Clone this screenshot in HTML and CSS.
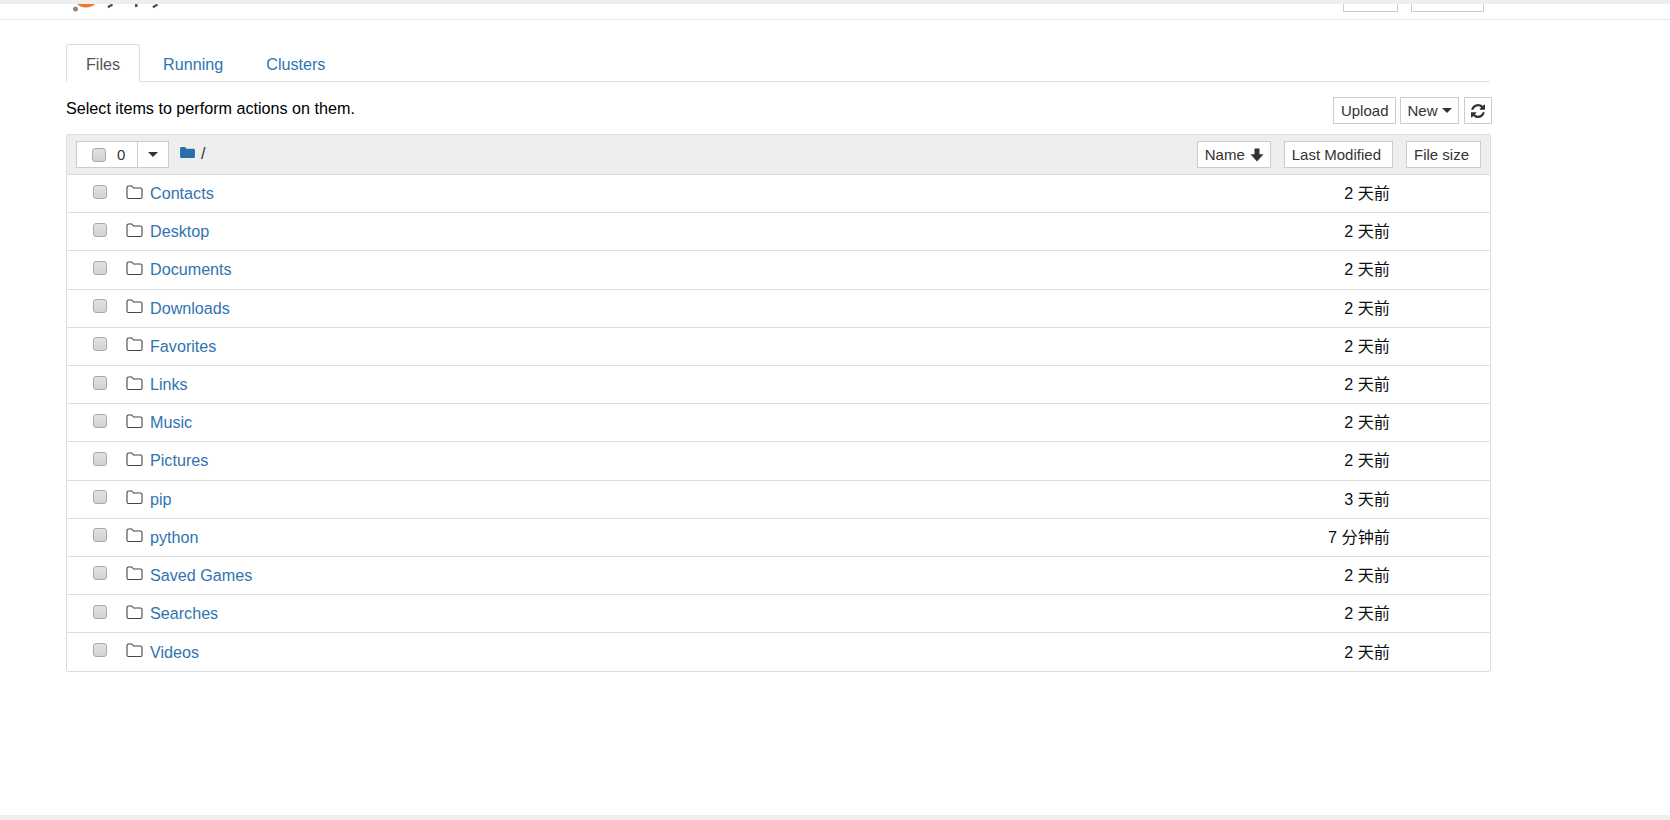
FILE: index.html
```html
<!DOCTYPE html>
<html lang="zh">
<head>
<meta charset="utf-8">
<title>Home</title>
<link rel="stylesheet" href="styles.css">
</head>
<body>
<header class="site-header">
  <svg class="logo" width="96" height="15" viewBox="0 0 96 15">
    <path d="M11 0 C15 4.500 25 4.500 29 0 Z" fill="#f37726"/>
    <circle cx="9.500" cy="5" r="2.500" fill="#8a8a8a"/>
    <path d="M46.500 0.500 L41.800 3.200" stroke="#4e4e4e" stroke-width="2.200" fill="none"/>
    <rect x="69" y="0" width="2.500" height="3" fill="#4e4e4e"/>
    <path d="M91.500 0.500 L86.800 3.200" stroke="#4e4e4e" stroke-width="2.200" fill="none"/>
  </svg>
  <div class="header-buttons">
    <span class="top-btn top-btn-a"></span>
    <span class="top-btn top-btn-b"></span>
  </div>
</header>
<main class="container">
  <nav class="tabs">
    <a class="tab active">Files</a>
    <a class="tab">Running</a>
    <a class="tab">Clusters</a>
  </nav>
  <div class="toolbar">
    <span class="hint">Select items to perform actions on them.</span>
    <div class="actions">
      <button class="btn btn-action">Upload</button>
      <button class="btn btn-action">New <i class="caret"></i></button>
      <button class="btn btn-icon" aria-label="Refresh">
        <svg width="14" height="14" viewBox="0 0 1536 1536"><path fill="#333" d="M1511 928q0 5-1 7-64 268-268 434.500t-478 166.500q-146 0-282.500-55t-243.500-157l-129 129q-19 19-45 19t-45-19-19-45v-448q0-26 19-45t45-19h448q26 0 45 19t19 45-19 45l-137 137q71 66 161 102t187 36q134 0 250-65t186-179q11-17 53-117 8-23 30-23h192q13 0 22.500 9.500t9.500 22.500zm25-800v448q0 26-19 45t-45 19h-448q-26 0-45-19t-19-45 19-45l138-138q-148-137-349-137-134 0-250 65t-186 179q-11 17-53 117-8 23-30 23h-199q-13 0-22.500-9.500t-9.500-22.500v-7q65-268 270-434.500t480-166.500q146 0 284 55.500t245 156.500l130-129q19-19 45-19t45 19 19 45z"/></svg>
      </button>
    </div>
  </div>
  <section class="list">
    <div class="list-head">
      <div class="select-group">
        <span class="select-main"><input type="checkbox" class="check"><span class="count">0</span></span>
        <span class="select-drop"><i class="caret"></i></span>
      </div>
      <svg class="crumb-icon" width="15" height="13" viewBox="0 0 16 14"><path fill="#296eaa" d="M1.500 1h4l1.500 2h7.500q1.500 0 1.500 1.500v7q0 1.500-1.500 1.500h-13q-1.500 0-1.500-1.500v-9q0-1.500 1.500-1.500z"/></svg>
      <span class="crumb-sep">/</span>
      <div class="sorts">
        <button class="btn btn-name">Name <svg width="14" height="14" viewBox="0 0 14 14"><path fill="#333" d="M4.500 0.500h5v5.800h4l-6.500 7.200L0.500 6.300h4z"/></svg></button>
        <button class="btn btn-wide">Last Modified</button>
        <button class="btn btn-wide">File size</button>
      </div>
    </div>
    <div class="row"><input type="checkbox" class="check"><svg class="folder"><use href="#folder-o"/></svg><a class="name">Contacts</a><span class="time">2 天前</span></div>
    <div class="row"><input type="checkbox" class="check"><svg class="folder"><use href="#folder-o"/></svg><a class="name">Desktop</a><span class="time">2 天前</span></div>
    <div class="row"><input type="checkbox" class="check"><svg class="folder"><use href="#folder-o"/></svg><a class="name">Documents</a><span class="time">2 天前</span></div>
    <div class="row"><input type="checkbox" class="check"><svg class="folder"><use href="#folder-o"/></svg><a class="name">Downloads</a><span class="time">2 天前</span></div>
    <div class="row"><input type="checkbox" class="check"><svg class="folder"><use href="#folder-o"/></svg><a class="name">Favorites</a><span class="time">2 天前</span></div>
    <div class="row"><input type="checkbox" class="check"><svg class="folder"><use href="#folder-o"/></svg><a class="name">Links</a><span class="time">2 天前</span></div>
    <div class="row"><input type="checkbox" class="check"><svg class="folder"><use href="#folder-o"/></svg><a class="name">Music</a><span class="time">2 天前</span></div>
    <div class="row"><input type="checkbox" class="check"><svg class="folder"><use href="#folder-o"/></svg><a class="name">Pictures</a><span class="time">2 天前</span></div>
    <div class="row"><input type="checkbox" class="check"><svg class="folder"><use href="#folder-o"/></svg><a class="name">pip</a><span class="time">3 天前</span></div>
    <div class="row"><input type="checkbox" class="check"><svg class="folder"><use href="#folder-o"/></svg><a class="name">python</a><span class="time">7 分钟前</span></div>
    <div class="row"><input type="checkbox" class="check"><svg class="folder"><use href="#folder-o"/></svg><a class="name">Saved Games</a><span class="time">2 天前</span></div>
    <div class="row"><input type="checkbox" class="check"><svg class="folder"><use href="#folder-o"/></svg><a class="name">Searches</a><span class="time">2 天前</span></div>
    <div class="row"><input type="checkbox" class="check"><svg class="folder"><use href="#folder-o"/></svg><a class="name">Videos</a><span class="time">2 天前</span></div>
  </section>
</main>
<footer class="bottom-bar"></footer>
<svg class="defs" width="0" height="0">
  <symbol id="folder-o" viewBox="0 0 17 15">
    <path fill="none" stroke="#444" stroke-width="1.100" d="M2.500 1h3.300l1.700 2h7q1.500 0 1.500 1.500v7.500q0 1.500-1.500 1.500h-12q-1.500 0-1.500-1.500v-9.500q0-1.500 1.500-1.500z"/>
  </symbol>
</svg>
</body>
</html>
```
FILE: styles.css
```css
* { box-sizing: border-box; }
html, body { height: 100%; }
body {
  margin: 0;
  height: 820px;
  overflow: hidden;
  background: #fff;
  color: #000;
  font-family: "Liberation Sans", "Noto Sans CJK SC", sans-serif;
  font-size: 16.150px;
  display: flex;
  flex-direction: column;
}
.site-header {
  height: 20px;
  flex: none;
  border-top: 4px solid #eee;
  border-bottom: 1px solid #e7e7e7;
  display: flex;
  justify-content: space-between;
  padding: 0 186px 0 66px;
  overflow: hidden;
}
.logo { display: block; flex: none; }
.header-buttons { display: flex; gap: 13px; align-items: flex-start; }
.top-btn { display: block; height: 8px; border: 1px solid #ccc; border-top: 0; }
.top-btn-a { width: 55px; }
.top-btn-b { width: 73px; }
.container {
  flex: 1;
  width: 1424px;
  margin-left: 66px;
  padding-top: 24px;
}
.tabs {
  display: flex;
  height: 38px;
  border-bottom: 1px solid #ddd;
}
.tab {
  color: #2f74b0;
  padding: 0 19px 0 20px;
  height: 38px;
  line-height: 38px;
  margin-right: 2px;
  border: 1px solid transparent;
}
.tab.active {
  color: #555;
  padding: 0 19px;
  border: 1px solid #ddd;
  border-bottom-color: #fff;
  border-radius: 3px 3px 0 0;
  background: #fff;
}
.toolbar {
  display: flex;
  justify-content: space-between;
  margin-top: 15px;
  height: 37px;
  width: 1426px;
}
.hint { line-height: 22px; }
.actions { display: flex; gap: 4px; align-items: flex-start; }
.btn {
  font: inherit;
  font-size: 15px;
  color: #333;
  background: #fff;
  border: 1px solid #ccc;
  height: 27px;
  padding: 0 7px;
  display: inline-flex;
  align-items: center;
  gap: 4px;
}
.btn-action { padding: 0 6.500px; }
.btn-icon { padding: 0 6px; margin-left: 1px; }
.btn-name { padding: 0 6px 0 7px; gap: 5px; }
.btn-wide { padding: 0 11px 0 7px; }
.caret {
  display: inline-block;
  width: 0;
  height: 0;
  border-top: 5px solid #333;
  border-left: 5px solid transparent;
  border-right: 5px solid transparent;
}
.list {
  border: 1px solid #ddd;
  border-radius: 2px;
  width: 1425px;
}
.list-head {
  height: 40px;
  background: #eee;
  border-bottom: 1px solid #ddd;
  display: flex;
  align-items: flex-start;
  padding: 6px 9px 0 9px;
}
.select-group { display: flex; height: 27px; }
.select-main {
  width: 62px;
  background: #fff;
  border: 1px solid #ccc;
  display: flex;
  align-items: center;
  padding-left: 15px;
  gap: 11px;
  color: #333;
  font-size: 15px;
}
.select-drop {
  width: 31px;
  background: #fff;
  border: 1px solid #ccc;
  border-left: 0;
  display: flex;
  align-items: center;
  justify-content: center;
}
.crumb-icon { margin: 5px 6px 0 11px; flex: none; }
.crumb-sep { color: #333; margin-top: 3px; }
.sorts { margin-left: auto; display: flex; gap: 13px; }
.check {
  appearance: none;
  -webkit-appearance: none;
  width: 14px;
  height: 14px;
  margin: 0;
  flex: none;
  border: 1px solid #aaa;
  border-radius: 3px;
  background: linear-gradient(#e2e2e2, #d2d2d2);
}
.row {
  height: 38.200px;
  border-bottom: 1px solid #ddd;
  display: flex;
  align-items: center;
  padding-left: 26px;
}
.row:last-child { border-bottom: 0; }
.row .check { margin-top: -4px; }
.folder { width: 17px; height: 15px; margin-left: 19px; margin-top: -3px; flex: none; }
.name { color: #2f74b0; margin-left: 7px; }
.time { margin-left: auto; margin-right: 100px; color: #111; margin-top: -3px; }
.bottom-bar { height: 5px; flex: none; background: #eee; }
.defs { position: absolute; }
```
